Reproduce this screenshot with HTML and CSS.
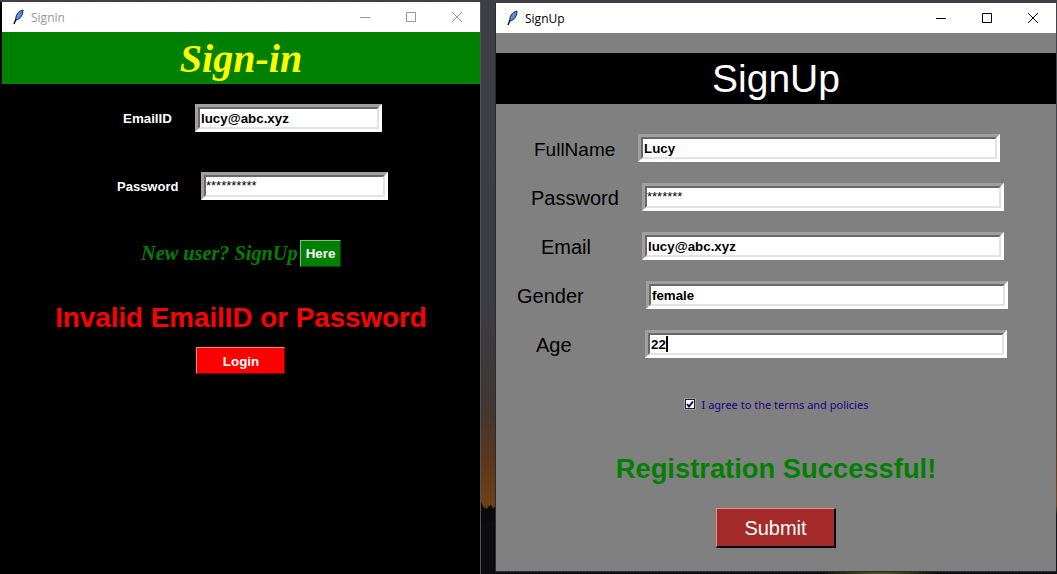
FILE: index.html
```html
<!DOCTYPE html>
<html lang="en">
<head>
    <meta charset="UTF-8">
    <title>Signin and SignUp</title>
    <link rel="stylesheet" href="styles.css">
</head>
<body>

<div class="desktop">
    <svg class="hills" width="15" height="24" viewBox="0 0 15 24"><path d="M0 4 L3 10 L6 11 L8 8 L10 7 L12 11 L15 8 L15 24 L0 24 Z" fill="#0b0b0e"/></svg>

    <!-- sign in window -->
    <div class="window signin">
        <div class="titlebar inactive">
            <svg class="feather" width="11" height="16" viewBox="0 0 11 16"><path d="M1 15 L3 10" stroke="#000" stroke-width="1.4" fill="none"/><path d="M3 11 C2 7 5 2 10 1 C10 5 8 10 3 11 Z" fill="#4f8fdc" stroke="#10233f" stroke-width="1"/></svg>
            <span class="title">Signin</span>
            <div class="controls">
                <svg width="12" height="12" viewBox="0 0 12 12"><path d="M1 6.5 H11" stroke="#999" fill="none"/></svg>
                <svg width="12" height="12" viewBox="0 0 12 12"><path d="M1.5 1.5 H10.5 V10.5 H1.5 Z" stroke="#999" fill="none"/></svg>
                <svg width="12" height="12" viewBox="0 0 12 12"><path d="M1 1 L11 11 M11 1 L1 11" stroke="#999" fill="none"/></svg>
            </div>
        </div>
        <div class="signin-head">Sign-in</div>
        <div class="row row-email">
            <div class="label">EmailID</div>
            <div class="entry"><div class="entry-in">lucy@abc.xyz</div></div>
        </div>
        <div class="row row-pass">
            <div class="label">Password</div>
            <div class="entry"><div class="entry-in secret">**********</div></div>
        </div>
        <div class="row row-new">
            <span class="new-user">New user? SignUp</span>
            <div class="btn btn-here">Here</div>
        </div>
        <div class="col">
            <div class="status status-bad">Invalid EmailID or Password</div>
            <div class="btn btn-login">Login</div>
        </div>
    </div>

    <!-- sign up window -->
    <div class="window signup">
        <div class="titlebar">
            <svg class="feather" width="11" height="16" viewBox="0 0 11 16"><path d="M1 15 L3 10" stroke="#000" stroke-width="1.4" fill="none"/><path d="M3 11 C2 7 5 2 10 1 C10 5 8 10 3 11 Z" fill="#4f8fdc" stroke="#10233f" stroke-width="1"/></svg>
            <span class="title">SignUp</span>
            <div class="controls">
                <svg width="12" height="12" viewBox="0 0 12 12"><path d="M1 6.5 H11" stroke="#000" fill="none"/></svg>
                <svg width="12" height="12" viewBox="0 0 12 12"><path d="M1.5 1.5 H10.5 V10.5 H1.5 Z" stroke="#000" fill="none"/></svg>
                <svg width="12" height="12" viewBox="0 0 12 12"><path d="M1 1 L11 11 M11 1 L1 11" stroke="#000" fill="none"/></svg>
            </div>
        </div>
        <div class="signup-head">SignUp</div>
        <div class="form">
            <div class="row2 r-name">
                <div class="label2">FullName</div>
                <div class="entry wide"><div class="entry-in">Lucy</div></div>
            </div>
            <div class="row2 r-pass">
                <div class="label2">Password</div>
                <div class="entry wide"><div class="entry-in secret">*******</div></div>
            </div>
            <div class="row2 r-mail">
                <div class="label2">Email</div>
                <div class="entry wide"><div class="entry-in">lucy@abc.xyz</div></div>
            </div>
            <div class="row2 r-gender">
                <div class="label2">Gender</div>
                <div class="entry wide"><div class="entry-in">female</div></div>
            </div>
            <div class="row2 r-age">
                <div class="label2">Age</div>
                <div class="entry wide"><div class="entry-in">22<span class="caret"></span></div></div>
            </div>
        </div>
        <div class="col">
            <div class="agree">
                <svg width="12" height="12" viewBox="0 0 12 12"><rect x="0.5" y="0.5" width="11" height="11" fill="#fff" stroke="#a0a0a0"/><rect x="1.5" y="1.5" width="9" height="9" fill="#fff" stroke="#222"/><path d="M3 6 L5 8.5 L9 3.5" fill="none" stroke="#000080" stroke-width="2"/></svg>
                <span>I agree to the terms and policies</span>
            </div>
            <div class="status status-ok">Registration Successful!</div>
            <div class="btn btn-submit">Submit</div>
        </div>
    </div>
</div>

</body>
</html>
```

FILE: styles.css
```css
html, body {
    margin: 0;
    height: 100%;
    overflow: hidden;
    background: #0b0b0e;
}
.desktop {
    position: relative;
    width: 1057px;
    height: 574px;
    overflow: hidden;
    background:
        radial-gradient(ellipse 60px 5px at 880px 574px, #4f6a1c, transparent),
        repeating-linear-gradient(90deg, rgba(255,255,255,0.03) 0 1px, transparent 1px 3px),
        linear-gradient(#3c3c45 0, #3a3a42 300px, #3b3532 400px, #5a3519 460px, #6e3f17 505px, #0b0b0e 515px);
}
.hills {
    position: absolute;
    left: 481px;
    top: 498px;
}

.window {
    position: absolute;
    display: flex;
    flex-direction: column;
    box-sizing: border-box;
}
.signin {
    left: 2px;
    top: 2px;
    width: 479px;
    height: 572px;
    background: #000;
    border-right: 1px solid #555;
    box-shadow: -2px 0 0 #000;
}
.signup {
    left: 495px;
    top: 3px;
    width: 561px;
    height: 569px;
    background: #808080;
    border-left: 1px solid #2c2c2c;
    border-bottom: 1px solid #2c2c2c;
}

.titlebar {
    display: flex;
    align-items: center;
    height: 30px;
    flex: none;
    background: #fff;
    padding-left: 11px;
    font: 12px "Open Sans", sans-serif;
    color: #000;
}
.titlebar.inactive {
    color: #999;
}
.feather {
    margin-right: 7px;
    flex: none;
}
.controls {
    margin-left: auto;
    display: flex;
    gap: 34px;
    padding-right: 17px;
}

.signin-head {
    height: 52px;
    background: #008000;
    color: #ff0;
    text-align: center;
    font: italic bold 40px/54px "Liberation Serif", serif;
}
.signup-head {
    margin-top: 20px;
    height: 51px;
    background: #000;
    color: #fff;
    text-align: center;
    font: 39px/51px "Liberation Sans", sans-serif;
}

/* entries, two layer bevel like tk */
.entry {
    box-sizing: border-box;
    width: 187px;
    height: 28px;
    border: 3px solid;
    border-color: #a0a0a0 #fff #fff #a0a0a0;
    flex: none;
}
.entry.wide {
    width: 362px;
}
.entry-in {
    box-sizing: border-box;
    height: 22px;
    border: 2px solid;
    border-color: #696969 #e3e3e3 #e3e3e3 #696969;
    background: #fff;
    color: #000;
    font: bold 13.33px/19px "Liberation Sans", sans-serif;
    white-space: nowrap;
    padding-left: 1px;
}
.entry-in.secret {
    font-weight: normal;
    font-size: 13px;
    line-height: 17px;
    padding-left: 0;
}
.caret {
    display: inline-block;
    width: 2px;
    height: 16px;
    background: #000;
    vertical-align: top;
    margin-top: 1px;
}

.row {
    display: flex;
    align-items: center;
}
.label {
    color: #fff;
    font: bold 13.33px "Liberation Sans", sans-serif;
}
.row-email {
    margin-top: 20px;
    padding-left: 121px;
}
.row-email .label {
    width: 72px;
}
.row-pass {
    margin-top: 40px;
    padding-left: 115px;
}
.row-pass .label {
    width: 84px;
    font-size: 13px;
}
.row-new {
    margin-top: 40px;
    padding-left: 139px;
    height: 27px;
}
.new-user {
    width: 159px;
    color: #008000;
    font: italic bold 20.3px "Liberation Serif", serif;
    white-space: nowrap;
}

.btn {
    box-sizing: border-box;
    display: flex;
    align-items: center;
    justify-content: center;
    border: 1px solid;
    color: #fff;
    font: bold 13.33px "Liberation Sans", sans-serif;
}
.btn-here {
    width: 41px;
    height: 27px;
    background: #008000;
    border-color: #80c080 #004000 #004000 #80c080;
}
.btn-login {
    width: 89px;
    height: 27px;
    margin-top: 14px;
    margin-right: 1px;
    padding: 1px 0 0 1px;
    background: #f00;
    border-color: #ff8080 #800000 #800000 #ff8080;
}
.btn-submit {
    width: 120px;
    height: 40px;
    margin-top: 24px;
    padding-top: 1px;
    background: #a52a2a;
    border-width: 1px 2px 2px 1px;
    border-color: #ea8f8f #000 #000 #ea8f8f;
    font: 20px "Liberation Sans", sans-serif;
}

.col {
    display: flex;
    flex-direction: column;
    align-items: center;
}
.status {
    font-family: "Liberation Sans", sans-serif;
    font-weight: bold;
    line-height: 31px;
}
.status-bad {
    margin-top: 35px;
    font-size: 27.75px;
    color: #f00;
}
.status-ok {
    margin-top: 42px;
    font-size: 27.35px;
    color: #008000;
}

.form {
    padding-top: 30px;
    display: flex;
    flex-direction: column;
    gap: 21px;
}
.row2 {
    display: flex;
    align-items: center;
}
.label2 {
    color: #000;
    padding-top: 2px;
    font: 20px/25px "Liberation Sans", sans-serif;
}
.r-name { padding-left: 38px; }
.r-name .label2 { width: 104px; font-size: 19px; }
.r-pass { padding-left: 35px; }
.r-pass .label2 { width: 111px; }
.r-mail { padding-left: 45px; }
.r-mail .label2 { width: 101px; }
.r-gender { padding-left: 21px; }
.r-gender .label2 { width: 129px; }
.r-age { padding-left: 40px; }
.r-age .label2 { width: 109px; }

.agree {
    margin-top: 39px;
    height: 14px;
    display: flex;
    align-items: center;
    gap: 5px;
    color: #1a0088;
    font: 11px "Noto Sans", sans-serif;
}
.agree svg {
    margin-right: 1px;
}
```
